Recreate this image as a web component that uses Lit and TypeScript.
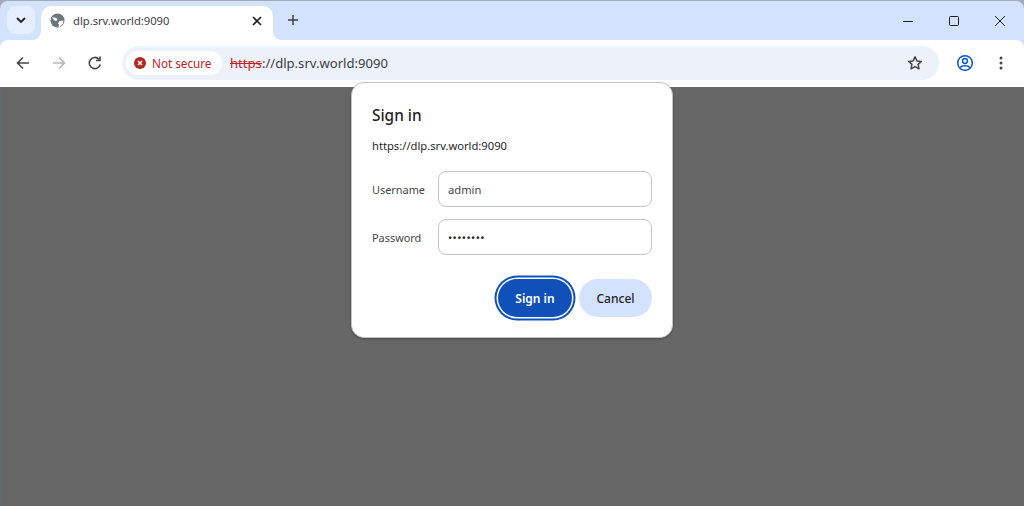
import { LitElement, html, css } from "lit";
import { customElement } from "lit/decorators.js";

@customElement("app-root")
export class AppRoot extends LitElement {
  static styles = css`
    :host { display: block; width: 1024px; height: 506px; position: relative; overflow: hidden; font-family: "Noto Sans", "Open Sans", sans-serif; color: #1f1f1f; background: #a3aab5; }
    .chrome { display: flex; flex-direction: column; height: 100%; }
    .strip { height: 40px; box-sizing: border-box; background: #d3e3fd; border-top: 1px solid #a3aab5; border-radius: 8px 8px 0 0; display: flex; align-items: flex-start; flex: none; position: relative; z-index: 1; }
    .search { width: 28px; height: 28px; margin: 5px 0 0 7px; background: #e4eefe; border-radius: 8px; display: flex; align-items: center; justify-content: center; flex: none; }
    .tab { position: relative; width: 232px; height: 34px; margin: 5px 0 0 6px; background: #fff; border-radius: 10px 10px 0 0; display: flex; align-items: center; box-sizing: border-box; padding: 0 8px 5px 9px; flex: none; }
    .tab::before, .tab::after { content: ""; position: absolute; bottom: 0; width: 8px; height: 8px; background: radial-gradient(circle at 100% 0, #d3e3fd 7.5px, #fff 8px); }
    .tab::before { left: -8px; transform: scaleX(-1); }
    .tab::after { right: -8px; }
    .title { font-size: 11.2px; margin-left: 7px; flex: 1; color: #3c4043; white-space: nowrap; }
    .new { margin: 5px 0 0 6px; width: 28px; height: 28px; display: flex; align-items: center; justify-content: center; }
    .spacer { flex: 1; }
    .win { display: flex; align-items: center; height: 39px; margin-right: 1px; }
    .win div { width: 46px; height: 39px; display: flex; align-items: center; justify-content: center; }
    .toolbar-wrap { background: #d3e3fd; flex: none; }
    .toolbar { height: 47px; box-sizing: border-box; background: #fff; display: flex; align-items: center; padding: 0 5px 1px 5px; border-radius: 8px 8px 0 0; }
    .nav { width: 36px; height: 36px; display: flex; align-items: center; justify-content: center; flex: none; }
    .omni { flex: 1; height: 34px; margin: 0 8px 0 9px; background: #edf2fa; border-radius: 17px; display: flex; align-items: center; padding: 0 8px 0 4px; min-width: 0; }
    .chip { height: 24px; width: 96px; box-sizing: border-box; background: #fff; border-radius: 12px; display: flex; align-items: center; padding: 0 0 0 8px; gap: 6px; color: #c5221f; font-size: 11.7px; flex: none; }
    .url { margin-left: 8px; font-size: 13.1px; color: #3c4043; flex: 1; white-space: nowrap; }
    .url s { color: #c5221f; text-decoration-color: #c5221f; }
    .star { width: 32px; height: 32px; display: flex; align-items: center; justify-content: center; }
    .page { flex: 1; background: #666; border-left: 1px solid #5f6c72; }
    .dialog { position: absolute; z-index: 2; left: 351px; top: 82px; width: 322px; height: 256px; box-sizing: border-box; background: #fff; border: 1px solid #c4c4c4; border-radius: 13px; padding: 20px 20px 0 20px; display: flex; flex-direction: column; box-shadow: 0 1px 2px rgba(0,0,0,.3); }
    h1 { margin: 0; font-size: 15.4px; font-weight: 500; line-height: 26px; color: #1f1f1f; }
    .origin { font-size: 11.2px; line-height: 16px; margin-top: 9px; color: #1f1f1f; }
    .row { display: flex; align-items: center; gap: 0; margin-top: 12px; }
    .row.first { margin-top: 17px; }
    label { width: 66px; font-size: 10.9px; color: #444746; flex: none; }
    .field { flex: 1; height: 36px; box-sizing: border-box; border: 1px solid #c4c7c5; border-radius: 8px; padding: 0 9px; display: flex; align-items: center; font-size: 11.2px; color: #444746; }
    .dots { letter-spacing: .4px; color: #1f1f1f; }
    .btns { display: flex; justify-content: flex-end; gap: 7px; margin-top: 24px; }
    button { font: inherit; font-size: 12px; font-weight: 600; height: 38px; border: none; border-radius: 19px; padding: 0; }
    .primary { width: 74px; background: #0f50b9; color: #fff; box-shadow: 0 0 0 1.5px #fff, 0 0 0 3.5px #0f50b9; margin-left: 3px; }
    .secondary { width: 73px; background: #d3e3fd; color: #1f1f1f; font-weight: 500; }
  `;

  render() {
    return html`
      <div class="chrome">
        <div class="strip">
          <div class="search">
            <svg width="12" height="12" viewBox="0 0 12 12"><path d="M2 4l4 4 4-4" fill="none" stroke="#1f1f1f" stroke-width="1.8"/></svg>
          </div>
          <div class="tab">
            <svg width="16" height="16" viewBox="0 0 16 16">
              <circle cx="7.500" cy="7.500" r="7" fill="#70757a"/>
              <path d="M2 4.500L5 4.500 7.500 6 6.500 8 4.500 7.500zM13.500 7.500L9.500 8 8 10.500 9 11.500 8.500 14.200 10.500 13.500 13 10.500z" fill="#fff"/>
            </svg>
            <span class="title">dlp.srv.world:9090</span>
            <svg width="16" height="16" viewBox="0 0 16 16"><path d="M4 4l8 8M12 4l-8 8" stroke="#1f1f1f" stroke-width="1.6" fill="none"/></svg>
          </div>
          <div class="new">
            <svg width="14" height="14" viewBox="0 0 14 14"><path d="M7 2v10M2 7h10" stroke="#3c4043" stroke-width="1.5" fill="none"/></svg>
          </div>
          <div class="spacer"></div>
          <div class="win">
            <div><svg width="12" height="12" viewBox="0 0 12 12"><path d="M1 6.500h10" stroke="#1f1f1f" fill="none"/></svg></div>
            <div><svg width="12" height="12" viewBox="0 0 12 12"><rect x="1.500" y="1.500" width="9" height="9" rx="1" stroke="#1f1f1f" fill="none"/></svg></div>
            <div><svg width="12" height="12" viewBox="0 0 12 12"><path d="M1 1l10 10M11 1L1 11" stroke="#1f1f1f" fill="none"/></svg></div>
          </div>
        </div>
        <div class="toolbar-wrap"><div class="toolbar">
          <div class="nav"><svg width="16" height="16" viewBox="0 0 16 16"><path d="M14 8H2.500M8 2.500L2.500 8 8 13.500" stroke="#444746" stroke-width="1.6" fill="none"/></svg></div>
          <div class="nav"><svg width="16" height="16" viewBox="0 0 16 16"><path d="M2 8h11.500M8 2.500L13.500 8 8 13.500" stroke="#b4b6b8" stroke-width="1.6" fill="none"/></svg></div>
          <div class="nav"><svg width="16" height="16" viewBox="0 0 16 16"><path d="M13.300 9.500A5.600 5.600 0 1 1 12 4.200M13 1.500V5.500H9" stroke="#444746" stroke-width="1.6" fill="none"/></svg></div>
          <div class="omni">
            <div class="chip">
              <svg width="12" height="12" viewBox="0 0 12 12"><circle cx="6" cy="6" r="6" fill="#b3261e"/><path d="M4 4l4 4M8 4L4 8" stroke="#fff" stroke-width="1.5"/></svg>
              <span>Not secure</span>
            </div>
            <div class="url"><s>https</s>://dlp.srv.world:9090</div>
            <div class="star"><svg width="16" height="16" viewBox="0 0 16 16"><path d="M8 1.800l1.900 4.100 4.500.5-3.300 3 .9 4.400L8 11.600l-4 2.200.9-4.400-3.300-3 4.500-.5z" fill="none" stroke="#444746" stroke-width="1.500" stroke-linejoin="round"/></svg></div>
          </div>
          <div class="nav"><svg width="18" height="18" viewBox="0 0 18 18"><circle cx="9" cy="9" r="7.300" fill="none" stroke="#0b57d0" stroke-width="1.500"/><circle cx="9" cy="7" r="2.400" fill="none" stroke="#0b57d0" stroke-width="1.500"/><path d="M4.200 13.600c1.500-2.400 8.100-2.400 9.600 0" fill="none" stroke="#0b57d0" stroke-width="1.500"/></svg></div>
          <div class="nav"><svg width="16" height="16" viewBox="0 0 16 16"><circle cx="8" cy="3" r="1.500" fill="#444746"/><circle cx="8" cy="8" r="1.500" fill="#444746"/><circle cx="8" cy="13" r="1.500" fill="#444746"/></svg></div>
        </div></div>
        <div class="page"></div>
      </div>
      <div class="dialog">
        <h1>Sign in</h1>
        <div class="origin">https://dlp.srv.world:9090</div>
        <div class="row first"><label>Username</label><div class="field">admin</div></div>
        <div class="row"><label>Password</label><div class="field dots">••••••••</div></div>
        <div class="btns"><button class="primary">Sign in</button><button class="secondary">Cancel</button></div>
      </div>
    `;
  }
}
